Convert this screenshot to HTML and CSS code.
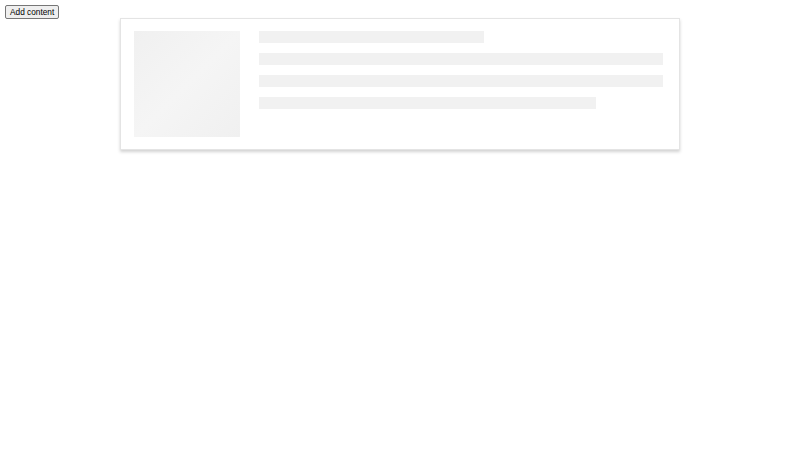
FILE: index.html
```html
<!DOCTYPE html>
<html>
<head>
<meta charset="utf-8">
<link rel="stylesheet" href="styles.css">
</head>
<body>
<button class="add-btn">Add content</button>
<div class="card">
  <div class="thumb"></div>
  <div class="lines">
    <div class="line line-short"></div>
    <div class="line"></div>
    <div class="line"></div>
    <div class="line line-mid"></div>
  </div>
</div>
</body>
</html>
```

FILE: styles.css
```css
html, body {
  margin: 0;
  background: #ffffff;
}
body {
  padding: 5px;
  font-family: "Liberation Sans", Arial, sans-serif;
}
.add-btn {
  display: block;
  font-family: "Liberation Sans", Arial, sans-serif;
  font-size: 8.3px;
  line-height: 10px;
  height: 14px;
  padding: 0 4px;
  margin: 0;
  color: #000;
  background: #efefef;
  border: 1px solid #767676;
  border-radius: 2px;
}
.card {
  box-sizing: border-box;
  width: 560px;
  margin: -1px auto 0;
  border: 1px solid #e4e4e4;
  background: #fff;
  padding: 12px 16px 12px 13px;
  display: flex;
  gap: 19px;
  box-shadow: 0 2px 3px rgba(0, 0, 0, 0.18);
}
.thumb {
  width: 106px;
  height: 106px;
  flex: none;
  background: linear-gradient(135deg, #f0f0f0 0%, #f5f5f5 50%, #f0f0f0 100%);
}
.lines {
  flex: 1;
  display: flex;
  flex-direction: column;
  gap: 10px;
}
.line {
  height: 12px;
  background: #f1f1f1;
}
.line-short {
  width: 225px;
}
.line-mid {
  width: 337px;
}
```
